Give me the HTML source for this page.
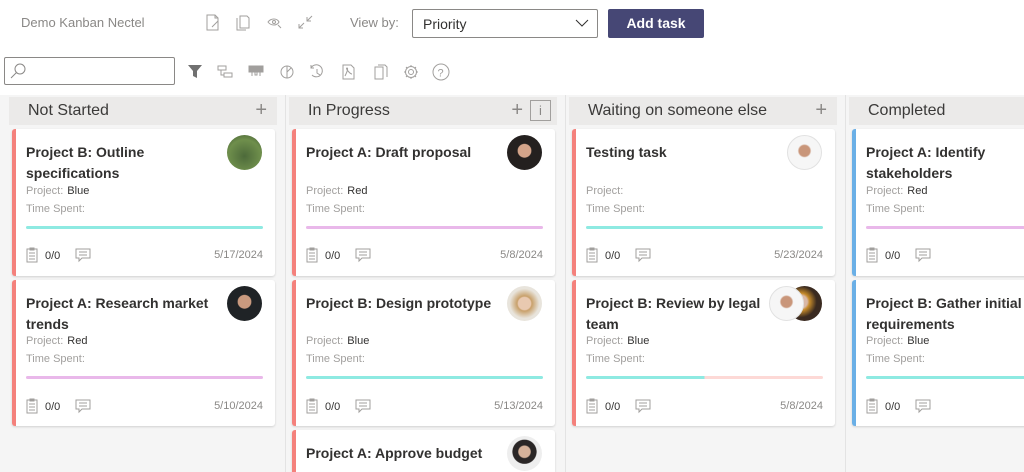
<!DOCTYPE html>
<html><head><meta charset="utf-8"><style>
*{box-sizing:border-box;margin:0;padding:0}
html,body{width:1024px;height:472px;overflow:hidden}
body{background:#fff;font-family:"Liberation Sans",Arial,sans-serif;position:relative;color:#323130}
.a{position:absolute}
.board{position:absolute;left:0;top:95px;width:1024px;height:377px;background:#f5f5f5}
.sep{position:absolute;top:95px;width:1px;height:377px;background:#e3e3e3}
.hdr{position:absolute;top:97px;height:28px;width:268px;background:#ebeae9;font-size:16px;color:#3b3a39;padding:5px 0 0 19px}
.plus{position:absolute;right:10px;top:2px;font-size:20px;color:#8a8886;font-weight:300}
.card{position:absolute;width:263px;background:#fff;border-radius:3px;box-shadow:0 1px 2px rgba(0,0,0,.15);border-left:4px solid #f4817c;overflow:hidden}
.card.b{border-left-color:#6aafe6}
.t{position:absolute;left:10px;top:13px;width:190px;font-size:14px;font-weight:bold;line-height:21px;color:#323130}
.m{position:absolute;left:10px;font-size:11px;color:#a19f9d}
.m b{font-weight:normal;color:#323130;margin-left:4px}
.bar{position:absolute;left:10px;width:237px;height:3px;border-radius:2px}
.ft{position:absolute;left:10px;top:118px;width:237px;font-size:11px;color:#323130}
.dt{position:absolute;right:0;top:2px;color:#8a8886}
.av{position:absolute;right:13px;top:6px;width:35px;height:35px;border-radius:50%}
.ic{stroke:#a19f9d;fill:none;stroke-width:1}
</style></head><body>
<div class="a" style="left:21px;top:15px;font-size:13px;color:#8a8886">Demo Kanban Nectel</div>
<svg class="a" style="left:204px;top:13px" width="120" height="20">
<g class="ic"><path d="M3 2h8l3 3v12H3z M11 2v3h3 M8 14l6-6"/><path d="M36 3h7l2 2v10h-9z M33 5v12h9"/><path d="M64 9c3-4 9-4 11 0c-2 4-8 4-11 0z M70 9m-1.5 0a1.5 1.5 0 1 0 3 0a1.5 1.5 0 1 0 -3 0 M74 12l3 3"/><path d="M95 15l5-5 M95 11v4h4 M108 3l-5 5 M103 4v4h4"/></g></svg>
<div class="a" style="left:350px;top:15px;font-size:13px;color:#8a8886">View by:</div>
<div class="a" style="left:412px;top:9px;width:186px;height:29px;border:1px solid #8a8886;border-radius:2px;font-size:14px;padding:6px 0 0 10px">Priority
<svg class="a" style="right:8px;top:9px" width="14" height="9"><path d="M1 1l6 6 6-6" stroke="#323130" fill="none"/></svg></div>
<div class="a" style="left:608px;top:9px;width:96px;height:29px;background:#464775;border-radius:2px;color:#fff;font-size:14px;font-weight:bold;text-align:center;line-height:29px">Add task</div>
<div class="a" style="left:4px;top:57px;width:171px;height:28px;border:1px solid #8a8886;border-radius:2px"><svg class="a" style="left:4px;top:4px" width="18" height="18"><circle cx="11" cy="7" r="5" stroke="#8a8886" fill="none"/><path d="M7.5 10.5L2 16" stroke="#8a8886"/></svg></div>
<svg class="a" style="left:186px;top:62px" width="270" height="20">
<path d="M2 3h14l-5 6v7l-4-2v-5z" fill="#707070"/>
<g class="ic"><path d="M32 4h8v4h-8z M38 11h8v4h-8z M35 8v5h3"/>
<rect x="63" y="4" width="14" height="6" fill="#a19f9d"/><path d="M66 10v4 M74 10v4 M69 10v3h2v-3"/>
<circle cx="101" cy="10" r="6"/><path d="M101 4v12 M101 10l4-4"/>
<path d="M125 6a6 6 0 1 1 1 7 M125 3v3h3 M131 7v4l3 2"/>
<path d="M157 3h8l3 3v11h-11z M159 14c3-6 3-8 2-8c-2 0 3 6 5 6"/>
<path d="M189 5h8v12h-8z M192 3h7l2 2v10"/>
<circle cx="225" cy="10" r="2.5"/><path d="M225 3v2 M225 15v2 M218 10h2 M230 10h2 M220 5l1.5 1.5 M228.5 13.5l1.5 1.5 M220 15l1.5-1.5 M228.5 6.5l1.5-1.5"/><circle cx="225" cy="10" r="5.5"/>
<circle cx="255" cy="10" r="8"/></g>
<text x="251.5" y="14.5" font-size="11" fill="#a19f9d" font-family="Liberation Sans">?</text></svg>

<div class="board"></div>
<div class="sep" style="left:285px"></div><div class="sep" style="left:565px"></div><div class="sep" style="left:845px"></div>

<div class="hdr" style="left:9px">Not Started<span class="plus">+</span></div>
<div class="hdr" style="left:289px">In Progress<span class="plus" style="right:34px">+</span><span class="a" style="right:6px;top:3px;width:21px;height:21px;border:1px solid #a19f9d;font-size:13px;color:#8a8886;text-align:center;line-height:19px">i</span></div>
<div class="hdr" style="left:569px">Waiting on someone else<span class="plus">+</span></div>
<div class="hdr" style="left:849px;width:180px">Completed</div>

<!-- col1 -->
<div class="card" style="left:12px;top:129px;height:147px"><div class="t">Project B: Outline specifications</div><div class="av" style="background:radial-gradient(circle at 50% 60%,#4d6a3a,#6f8f4c 60%,#3d5630)"></div>
<div class="m" style="top:56px">Project:<b>Blue</b></div><div class="m" style="top:74px">Time Spent:</div><div class="bar" style="top:97px;background:#8eeae2"></div>
<div class="ft"><svg width="80" height="16" style="vertical-align:middle"><g class="ic"><path d="M1 2h10v13h-10z M4 1h4v2h-4z M3 6h6 M3 9h6 M3 12h6"/><path d="M50 2h14v9h-8l-3 3v-3h-3z M53 5h8 M53 8h8"/></g><text x="19" y="12" font-size="11" fill="#323130" font-family="Liberation Sans">0/0</text></svg><span class="dt">5/17/2024</span></div></div>
<div class="card" style="left:12px;top:280px;height:146px"><div class="t">Project A: Research market trends</div><div class="av" style="background:radial-gradient(circle at 50% 45%,#c99a7f 0 25%,#1f2326 28%)"></div>
<div class="m" style="top:55px">Project:<b>Red</b></div><div class="m" style="top:73px">Time Spent:</div><div class="bar" style="top:96px;background:#e9b8ea"></div>
<div class="ft"><svg width="80" height="16" style="vertical-align:middle"><g class="ic"><path d="M1 2h10v13h-10z M4 1h4v2h-4z M3 6h6 M3 9h6 M3 12h6"/><path d="M50 2h14v9h-8l-3 3v-3h-3z M53 5h8 M53 8h8"/></g><text x="19" y="12" font-size="11" fill="#323130" font-family="Liberation Sans">0/0</text></svg><span class="dt">5/10/2024</span></div></div>

<!-- col2 -->
<div class="card" style="left:292px;top:129px;height:147px"><div class="t">Project A: Draft proposal</div><div class="av" style="background:radial-gradient(circle at 50% 45%,#d4a48a 0 25%,#24201f 28%)"></div>
<div class="m" style="top:56px">Project:<b>Red</b></div><div class="m" style="top:74px">Time Spent:</div><div class="bar" style="top:97px;background:#e9b8ea"></div>
<div class="ft"><svg width="80" height="16" style="vertical-align:middle"><g class="ic"><path d="M1 2h10v13h-10z M4 1h4v2h-4z M3 6h6 M3 9h6 M3 12h6"/><path d="M50 2h14v9h-8l-3 3v-3h-3z M53 5h8 M53 8h8"/></g><text x="19" y="12" font-size="11" fill="#323130" font-family="Liberation Sans">0/0</text></svg><span class="dt">5/8/2024</span></div></div>
<div class="card" style="left:292px;top:280px;height:146px"><div class="t" style="width:200px">Project B: Design prototype</div><div class="av" style="background:radial-gradient(circle at 50% 50%,#e9c9b0 0 25%,#c8a06a 30%,#e8e4dc 60%)"></div>
<div class="m" style="top:55px">Project:<b>Blue</b></div><div class="m" style="top:73px">Time Spent:</div><div class="bar" style="top:96px;background:#8eeae2"></div>
<div class="ft"><svg width="80" height="16" style="vertical-align:middle"><g class="ic"><path d="M1 2h10v13h-10z M4 1h4v2h-4z M3 6h6 M3 9h6 M3 12h6"/><path d="M50 2h14v9h-8l-3 3v-3h-3z M53 5h8 M53 8h8"/></g><text x="19" y="12" font-size="11" fill="#323130" font-family="Liberation Sans">0/0</text></svg><span class="dt">5/13/2024</span></div></div>
<div class="card" style="left:292px;top:430px;height:42px;border-radius:3px 3px 0 0"><div class="t" style="width:200px">Project A: Approve budget</div><div class="av" style="background:radial-gradient(circle at 50% 45%,#d6b29a 0 22%,#2a2626 26% 45%,#eeeeee 48%)"></div></div>

<!-- col3 -->
<div class="card" style="left:572px;top:129px;height:147px"><div class="t">Testing task</div><div class="av" style="background:radial-gradient(circle at 50% 45%,#c9967a 0 22%,#f6f6f6 28%);border:1px solid #e1e1e1"></div>
<div class="m" style="top:56px">Project:</div><div class="m" style="top:74px">Time Spent:</div><div class="bar" style="top:97px;background:#8eeae2"></div>
<div class="ft"><svg width="80" height="16" style="vertical-align:middle"><g class="ic"><path d="M1 2h10v13h-10z M4 1h4v2h-4z M3 6h6 M3 9h6 M3 12h6"/><path d="M50 2h14v9h-8l-3 3v-3h-3z M53 5h8 M53 8h8"/></g><text x="19" y="12" font-size="11" fill="#323130" font-family="Liberation Sans">0/0</text></svg><span class="dt">5/23/2024</span></div></div>
<div class="card" style="left:572px;top:280px;height:146px"><div class="t" style="width:185px">Project B: Review by legal team</div>
<div class="av" style="background:radial-gradient(circle at 40% 45%,#d9b8a6 0 22%,#c58a2a 30%,#3a2a20 55%)"></div>
<div class="av" style="right:31px;background:radial-gradient(circle at 50% 45%,#c9967a 0 22%,#f6f6f6 28%);border:1px solid #e1e1e1"></div>
<div class="m" style="top:55px">Project:<b>Blue</b></div><div class="m" style="top:73px">Time Spent:</div><div class="bar" style="top:96px;background:linear-gradient(90deg,#8eeae2 50%,#fdd9d6 50%)"></div>
<div class="ft"><svg width="80" height="16" style="vertical-align:middle"><g class="ic"><path d="M1 2h10v13h-10z M4 1h4v2h-4z M3 6h6 M3 9h6 M3 12h6"/><path d="M50 2h14v9h-8l-3 3v-3h-3z M53 5h8 M53 8h8"/></g><text x="19" y="12" font-size="11" fill="#323130" font-family="Liberation Sans">0/0</text></svg><span class="dt">5/8/2024</span></div></div>

<!-- col4 -->
<div class="card b" style="left:852px;top:129px;height:147px"><div class="t">Project A: Identify stakeholders</div>
<div class="m" style="top:56px">Project:<b>Red</b></div><div class="m" style="top:74px">Time Spent:</div><div class="bar" style="top:97px;background:#e9b8ea"></div>
<div class="ft"><svg width="80" height="16" style="vertical-align:middle"><g class="ic"><path d="M1 2h10v13h-10z M4 1h4v2h-4z M3 6h6 M3 9h6 M3 12h6"/><path d="M50 2h14v9h-8l-3 3v-3h-3z M53 5h8 M53 8h8"/></g><text x="19" y="12" font-size="11" fill="#323130" font-family="Liberation Sans">0/0</text></svg></div></div>
<div class="card b" style="left:852px;top:280px;height:146px"><div class="t" style="width:200px">Project B: Gather initial requirements</div>
<div class="m" style="top:55px">Project:<b>Blue</b></div><div class="m" style="top:73px">Time Spent:</div><div class="bar" style="top:96px;background:#8eeae2"></div>
<div class="ft"><svg width="80" height="16" style="vertical-align:middle"><g class="ic"><path d="M1 2h10v13h-10z M4 1h4v2h-4z M3 6h6 M3 9h6 M3 12h6"/><path d="M50 2h14v9h-8l-3 3v-3h-3z M53 5h8 M53 8h8"/></g><text x="19" y="12" font-size="11" fill="#323130" font-family="Liberation Sans">0/0</text></svg></div></div>
</body></html>
